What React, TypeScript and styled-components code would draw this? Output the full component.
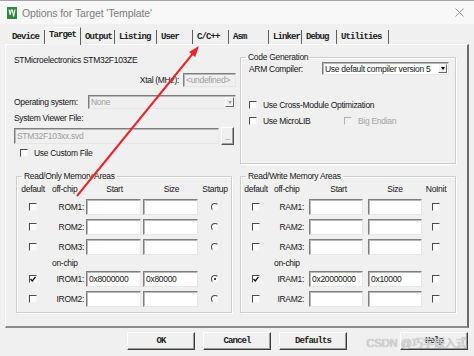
import React from "react";
import styled, { createGlobalStyle } from "styled-components";

const GlobalStyle = createGlobalStyle`
  html, body {
    margin: 0;
    padding: 0;
  }
  body {
    width: 474px;
    height: 356px;
    overflow: hidden;
    background: #f0f0f0;
  }
`;

const Window = styled.div`
  position: relative;
  width: 474px;
  height: 356px;
  display: flex;
  flex-direction: column;
  background: #f0f0f0;
  overflow: hidden;
  font-family: "Liberation Sans", Arial, sans-serif;
  font-size: 8.5px;
  letter-spacing: -0.3px;
  color: #161616;
`;

const TitleBar = styled.div`
  flex: none;
  height: 24px;
  box-sizing: border-box;
  display: flex;
  align-items: center;
  gap: 5px;
  padding: 0 10px 0 7px;
  background: #f8f8f8;
  border-top: 1px solid #a4a4a4;
`;

const TitleText = styled.span`
  flex: 1;
  font-family: "Liberation Sans", Arial, sans-serif;
  font-size: 10.5px;
  letter-spacing: -0.1px;
  color: #7c7c7c;
`;

const TabStrip = styled.div`
  flex: none;
  height: 20px;
  display: flex;
  align-items: flex-end;
  padding-left: 8px;
  position: relative;
  z-index: 1;
`;

const Tab = styled.div<{ $w: number; $active?: boolean }>`
  box-sizing: border-box;
  width: ${(p) => p.$w}px;
  height: ${(p) => (p.$active ? 18 : 14)}px;
  margin-bottom: ${(p) => (p.$active ? -1 : 0)}px;
  padding: ${(p) => (p.$active ? "2px 0 0 3px" : "0 0 0 4px")};
  display: flex;
  align-items: ${(p) => (p.$active ? "flex-start" : "center")};
  font-family: "Liberation Mono", "Courier New", monospace;
  font-weight: bold;
  font-size: 9px;
  letter-spacing: -0.9px;
  color: #1c1c1c;
  background: ${(p) => (p.$active ? "#f3f3f3" : "transparent")};
  border-right: 1px solid #5e5e5e;
  border-left: ${(p) => (p.$active ? "1px solid #ffffff" : "none")};
  border-top: ${(p) => (p.$active ? "1px solid #ffffff" : "none")};
`;

const Panel = styled.div`
  flex: none;
  height: 284px;
  margin: 0 5px;
  box-sizing: border-box;
  border-top: 1px solid #ffffff;
  border-left: 1px solid #ffffff;
  border-right: 2px solid #6a6a6a;
  border-bottom: 2px solid #8a8a8a;
  padding: 7px 10px 14px 8px;
  display: grid;
  grid-template-columns: 222px 216px;
  grid-template-rows: 112px 142px;
  column-gap: 4px;
  row-gap: 7px;
`;

const Column = styled.div`
  display: flex;
  flex-direction: column;
`;

const Line = styled.div<{ $mt?: number; $end?: boolean }>`
  display: flex;
  align-items: center;
  justify-content: ${(p) => (p.$end ? "flex-end" : "flex-start")};
  margin-top: ${(p) => p.$mt ?? 0}px;
  min-height: 10px;
  white-space: nowrap;
`;

const Label = styled.span<{ $w?: number; $gap?: number }>`
  display: inline-block;
  width: ${(p) => (p.$w ? `${p.$w}px` : "auto")};
  margin-right: ${(p) => p.$gap ?? 0}px;
  flex: none;
`;

const Field = styled.div<{ $w: number; $h?: number; $disabled?: boolean }>`
  box-sizing: border-box;
  width: ${(p) => p.$w}px;
  height: ${(p) => p.$h ?? 16}px;
  flex: none;
  display: flex;
  align-items: center;
  padding: 0 0 0 2px;
  background: ${(p) => (p.$disabled ? "#f0f0f0" : "#ffffff")};
  color: ${(p) => (p.$disabled ? "#9c9c9c" : "#161616")};
  border: 1px solid;
  border-color: #7e7e7e #e6e6e6 #e6e6e6 #7e7e7e;
  box-shadow: inset 1px 1px 0 #b9b9b9;
  white-space: nowrap;
  overflow: hidden;
`;

const Select = styled(Field)`
  justify-content: space-between;
  padding-right: 1px;
`;

const DropArrow = styled.span<{ $disabled?: boolean }>`
  box-sizing: border-box;
  width: 9px;
  height: calc(100% - 2px);
  border: 1px solid;
  border-color: #ffffff #6a6a6a #6a6a6a #ffffff;
  background: #f0f0f0;
  display: flex;
  align-items: center;
  justify-content: center;
  &::after {
    content: "";
    border-left: 2.5px solid transparent;
    border-right: 2.5px solid transparent;
    border-top: 3px solid ${(p) => (p.$disabled ? "#a0a0a0" : "#000000")};
  }
`;

const Browse = styled.div`
  box-sizing: border-box;
  width: 13px;
  height: 18px;
  margin-left: 2px;
  background: #f0f0f0;
  border: 1px solid;
  border-color: #ffffff #555555 #555555 #ffffff;
  box-shadow: inset -1px -1px 0 #a0a0a0;
  display: flex;
  align-items: flex-end;
  justify-content: center;
  padding-bottom: 3px;
  font-size: 7px;
  line-height: 7px;
  color: #555;
`;

const Box = styled.span<{ $disabled?: boolean }>`
  box-sizing: border-box;
  display: inline-flex;
  align-items: center;
  justify-content: center;
  width: 8px;
  height: 8px;
  flex: none;
  background: ${(p) => (p.$disabled ? "#f0f0f0" : "#fbfbfb")};
  border: 1px solid;
  border-color: ${(p) =>
    p.$disabled ? "#b0b0b0 #f4f4f4 #f4f4f4 #b0b0b0" : "#4a4a4a #f4f4f4 #f4f4f4 #4a4a4a"};
`;

const Round = styled.span`
  box-sizing: border-box;
  display: inline-flex;
  align-items: center;
  justify-content: center;
  width: 8px;
  height: 8px;
  border-radius: 50%;
  background: #fbfbfb;
  border: 1px solid;
  border-color: #4a4a4a #f0f0f0 #f0f0f0 #4a4a4a;
`;

const Dot = styled.span`
  width: 2px;
  height: 2px;
  border-radius: 50%;
  background: #000;
`;

const CheckItem = styled.div<{ $w?: number; $ml?: number; $disabled?: boolean }>`
  display: flex;
  align-items: center;
  gap: 6px;
  width: ${(p) => (p.$w ? `${p.$w}px` : "auto")};
  margin-left: ${(p) => p.$ml ?? 0}px;
  color: ${(p) => (p.$disabled ? "#a3a3a3" : "inherit")};
`;

const Group = styled.fieldset<{ $ml?: number; $w?: number }>`
  box-sizing: border-box;
  margin: 0 0 0 ${(p) => p.$ml ?? 0}px;
  width: ${(p) => (p.$w ? `${p.$w}px` : "auto")};
  padding: 0;
  min-width: 0;
  border: 1px solid #cdcdcd;
  box-shadow: 1px 1px 0 #ffffff, inset 1px 1px 0 #ffffff;
`;

const Legend = styled.legend`
  margin-left: 5px;
  padding: 0 2px;
  line-height: 10px;
  font-size: 8.5px;
`;

const GroupBody = styled.div`
  padding: 0 7px 0 8px;
  display: flex;
  flex-direction: column;
`;

const MemGrid = styled.div<{ $cols: string }>`
  display: grid;
  grid-template-columns: ${(p) => p.$cols};
  grid-template-rows: 12px 16px 16px 16px 8px 16px 16px;
  row-gap: 4px;
  margin-top: 2px;
  align-items: center;
`;

const Head = styled.span<{ $left?: boolean }>`
  text-align: ${(p) => (p.$left ? "left" : "center")};
  padding-left: ${(p) => (p.$left ? 3 : 0)}px;
  white-space: nowrap;
`;

const Cell = styled.div`
  display: flex;
  justify-content: center;
  align-items: center;
`;

const RowLabel = styled.span<{ $pr: number }>`
  text-align: right;
  padding-right: ${(p) => p.$pr}px;
`;

const OnChip = styled.span`
  grid-column: 2 / -1;
  padding-left: 3px;
  line-height: 8px;
  white-space: nowrap;
`;

const ButtonBar = styled.div`
  flex: 1;
  display: flex;
  align-items: flex-start;
  gap: 8px;
  padding: 4px 6px 0 127px;
`;

const Button = styled.div<{ $push?: boolean }>`
  box-sizing: border-box;
  width: 68px;
  height: 18px;
  margin-left: ${(p) => (p.$push ? "auto" : "0")};
  display: flex;
  align-items: center;
  justify-content: center;
  background: #f0f0f0;
  border: 1px solid;
  border-color: #ffffff #3c3c3c #3c3c3c #ffffff;
  box-shadow: inset -1px -1px 0 #9a9a9a;
  font-family: "Liberation Mono", "Courier New", monospace;
  font-weight: bold;
  font-size: 9px;
  letter-spacing: -0.9px;
  color: #1c1c1c;
`;

const Arrow = styled.svg`
  position: absolute;
  left: 0;
  top: 0;
  pointer-events: none;
`;

const Watermark = styled.span`
  position: absolute;
  right: 7px;
  bottom: 6px;
  font-family: "Liberation Sans", "Noto Sans CJK SC", sans-serif;
  font-size: 11px;
  letter-spacing: 0;
  color: #d9d9d9;
  text-shadow: 0 0 1px #8c8c8c;
`;

const Tick = () => (
  <svg width="6" height="6" viewBox="0 0 6 6">
    <path d="M0.5 3 L2.3 5 L5.5 0.8" fill="none" stroke="#111" strokeWidth="1.3" />
  </svg>
);

const Check = ({ on, disabled }: { on?: boolean; disabled?: boolean }) => (
  <Box $disabled={disabled}>{on && <Tick />}</Box>
);

const Radio = ({ on }: { on?: boolean }) => <Round>{on && <Dot />}</Round>;

const tabs: [string, number][] = [
  ["Device", 37],
  ["Target", 36],
  ["Output", 34],
  ["Listing", 42],
  ["User", 36],
  ["C/C++", 36],
  ["Asm", 40],
  ["Linker", 33],
  ["Debug", 35],
  ["Utilities", 52],
];

interface MemRow {
  name: string;
  start: string;
  size: string;
  def?: boolean;
  boot?: boolean;
}

const romOff: MemRow[] = [
  { name: "ROM1:", start: "", size: "" },
  { name: "ROM2:", start: "", size: "" },
  { name: "ROM3:", start: "", size: "" },
];
const romOn: MemRow[] = [
  { name: "IROM1:", start: "0x8000000", size: "0x80000", def: true, boot: true },
  { name: "IROM2:", start: "", size: "" },
];
const ramOff: MemRow[] = [
  { name: "RAM1:", start: "", size: "" },
  { name: "RAM2:", start: "", size: "" },
  { name: "RAM3:", start: "", size: "" },
];
const ramOn: MemRow[] = [
  { name: "IRAM1:", start: "0x20000000", size: "0x10000", def: true },
  { name: "IRAM2:", start: "", size: "" },
];

interface MemoryAreaProps {
  title: string;
  lastHead: string;
  off: MemRow[];
  on: MemRow[];
  cols: string;
  labelPad: number;
  fieldW: number;
  radio?: boolean;
  ml?: number;
  w?: number;
}

const MemoryArea = ({ title, lastHead, off, on, cols, labelPad, fieldW, radio, ml, w }: MemoryAreaProps) => {
  const row = (r: MemRow) => (
    <React.Fragment key={r.name}>
      <Cell>
        <Check on={r.def} />
      </Cell>
      <RowLabel $pr={labelPad}>{r.name}</RowLabel>
      <Field $w={fieldW}>{r.start}</Field>
      <Field $w={fieldW}>{r.size}</Field>
      <Cell>{radio ? <Radio on={r.boot} /> : <Check />}</Cell>
    </React.Fragment>
  );
  return (
    <Group $ml={ml} $w={w}>
      <Legend>{title}</Legend>
      <MemGrid $cols={cols}>
        <Head>default</Head>
        <Head $left>off-chip</Head>
        <Head>Start</Head>
        <Head>Size</Head>
        <Head>{lastHead}</Head>
        {off.map(row)}
        <OnChip>on-chip</OnChip>
        {on.map(row)}
      </MemGrid>
    </Group>
  );
};

const App = () => {
  return (
    <Window>
      <GlobalStyle />
      <TitleBar>
        <svg width="10" height="12" viewBox="0 0 10 12">
          <rect x="0" y="0" width="10" height="12" fill="#2f8a3c" />
          <path d="M2 2.5 L3.2 8 L4.4 2.5 M5.2 2.5 L6.6 9.5 L8 2.5" fill="none" stroke="#fff" strokeWidth="1.1" />
        </svg>
        <TitleText>Options for Target 'Template'</TitleText>
        <svg width="9" height="9" viewBox="0 0 9 9">
          <path d="M0.5 0.5 L8.5 8.5 M8.5 0.5 L0.5 8.5" stroke="#8a8a8a" strokeWidth="0.9" />
        </svg>
      </TitleBar>

      <TabStrip>
        {tabs.map(([t, w]) => (
          <Tab key={t} $w={w} $active={t === "Target"}>
            {t}
          </Tab>
        ))}
      </TabStrip>

      <Panel>
        <Column>
          <Line $mt={3}>STMicroelectronics STM32F103ZE</Line>
          <Line $mt={8} $end>
            <Label $gap={4}>Xtal (MHz):</Label>
            <Field $w={53} $h={14} $disabled>
              &lt;undefined&gt;
            </Field>
          </Line>
          <Line $mt={8}>
            <Label $w={74}>Operating system:</Label>
            <Select $w={148} $h={14} $disabled>
              None
              <DropArrow $disabled />
            </Select>
          </Line>
          <Line $mt={4}>System Viewer File:</Line>
          <Line $mt={4}>
            <Field $w={205} $disabled>
              STM32F103xx.svd
            </Field>
            <Browse>...</Browse>
          </Line>
          <Line $mt={3}>
            <CheckItem $ml={6}>
              <Check />
              Use Custom File
            </CheckItem>
          </Line>
        </Column>

        <Group>
          <Legend>Code Generation</Legend>
          <GroupBody>
            <Line>
              <Label $w={73}>ARM Compiler:</Label>
              <Select $w={127} $h={13}>
                Use default compiler version 5
                <DropArrow />
              </Select>
            </Line>
            <Line $mt={25}>
              <CheckItem>
                <Check />
                Use Cross-Module Optimization
              </CheckItem>
            </Line>
            <Line $mt={6}>
              <CheckItem $w={95}>
                <Check />
                Use MicroLIB
              </CheckItem>
              <CheckItem $disabled>
                <Check disabled />
                Big Endian
              </CheckItem>
            </Line>
          </GroupBody>
        </Group>

        <MemoryArea
          title="Read/Only Memory Areas"
          lastHead="Startup"
          off={romOff}
          on={romOn}
          cols="32px 37px 57px 57px 30px"
          labelPad={2}
          fieldW={55}
          radio
          ml={2}
          w={216}
        />
        <MemoryArea
          title="Read/Write Memory Areas"
          lastHead="NoInit"
          off={ramOff}
          on={ramOn}
          cols="30px 38px 59px 54px 28px"
          labelPad={5}
          fieldW={54}
        />
      </Panel>

      <ButtonBar>
        <Button>OK</Button>
        <Button>Cancel</Button>
        <Button>Defaults</Button>
        <Button $push>Help</Button>
      </ButtonBar>

      <Arrow width="474" height="356" viewBox="0 0 474 356">
        <line x1="77" y1="196" x2="192.5" y2="54" stroke="#e8262b" strokeWidth="2" />
        <polygon points="199,46 195.2,57 189,52" fill="#e8262b" />
      </Arrow>
      <Watermark>CSDN @巧学嵌入式</Watermark>
    </Window>
  );
};

export default App;
